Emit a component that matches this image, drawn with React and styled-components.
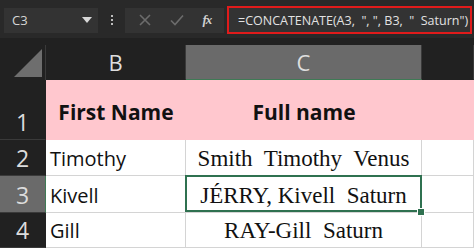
import React from 'react';
import styled, { createGlobalStyle } from 'styled-components';

const Global = createGlobalStyle`
  html, body {
    margin: 0;
    padding: 0;
    background: #212121;
    overflow: hidden;
  }
`;

const Page = styled.div`
  width: 474px;
  height: 248px;
  background: #212121;
  display: flex;
  flex-direction: column;
  overflow: hidden;
`;

const Toolbar = styled.div`
  height: 38px;
  background: #292929;
  display: flex;
  align-items: center;
  padding: 0 2px 0 4px;
  box-sizing: border-box;
  flex-shrink: 0;
`;

const NameBox = styled.div`
  width: 94px;
  height: 25px;
  margin-top: 2px;
  background: #333333;
  display: flex;
  align-items: center;
  justify-content: space-between;
  padding: 0 6px 0 8px;
  box-sizing: border-box;
  font-family: "Open Sans", "Liberation Sans", sans-serif;
  font-size: 13px;
  color: #d6d6d6;
`;

const Caret = styled.span`
  width: 0;
  height: 0;
  border-left: 5px solid transparent;
  border-right: 5px solid transparent;
  border-top: 6px solid #d8d8d8;
`;

const Dots = styled.div`
  width: 27px;
  display: flex;
  flex-direction: column;
  align-items: center;
  gap: 2px;
  margin-top: 2px;
  span {
    width: 2px;
    height: 2px;
    background: #bdbdbd;
  }
`;

const ButtonBox = styled.div`
  width: 99px;
  height: 25px;
  margin-top: 2px;
  background: #333333;
  display: flex;
  align-items: center;
  justify-content: space-around;
  padding: 0 4px;
  box-sizing: border-box;
`;

const FxLabel = styled.span`
  font-family: "Liberation Serif", serif;
  font-style: italic;
  font-weight: bold;
  font-size: 13px;
  color: #d0d0d0;
  letter-spacing: -1px;
`;

const FormulaBox = styled.div`
  margin-left: 3px;
  flex: 1;
  height: 28px;
  margin-top: 2px;
  border: 2px solid #e01b1b;
  background: #333333;
  box-sizing: border-box;
  display: flex;
  align-items: center;
  padding-left: 9px;
  font-family: "Open Sans", "Liberation Sans", sans-serif;
  font-size: 12.5px;
  color: #e2e2e2;
  white-space: pre;
`;

const Grid = styled.div`
  margin-top: 7px;
  display: grid;
  grid-template-columns: 46px 140px 236px 1fr;
  grid-template-rows: 35px 60px 36px 37px 1fr;
  flex: 1;
`;

const Corner = styled.div`
  background: #212121;
  position: relative;
  border-right: 1px solid #3a3a3a;
`;

const CornerTriangle = styled.div`
  position: absolute;
  right: 3px;
  bottom: 3px;
  width: 0;
  height: 0;
  border-left: 28px solid transparent;
  border-bottom: 28px solid #6e6e6e;
`;

const ColHead = styled.div`
  background: ${p => (p.$active ? '#6a6a6a' : '#212121')};
  border-bottom: 1px solid ${p => (p.$active ? '#3f7a55' : '#212121')};
  border-right: 1px solid #3a3a3a;
  display: flex;
  align-items: center;
  justify-content: center;
  font-family: "Open Sans", "Liberation Sans", sans-serif;
  font-size: 22px;
  color: #dedede;
  box-sizing: border-box;
`;

const RowHead = styled.div`
  background: ${p => (p.$active ? '#6a6a6a' : '#212121')};
  border-right: 1px solid ${p => (p.$active ? '#3f7a55' : '#212121')};
  border-bottom: 1px solid #3a3a3a;
  display: flex;
  align-items: flex-end;
  justify-content: center;
  padding-bottom: 1px;
  font-family: "Open Sans", "Liberation Sans", sans-serif;
  font-size: 23px;
  line-height: 31px;
  color: #dcdcdc;
  box-sizing: border-box;
`;

const HeadCell = styled.div`
  background: #ffc7ce;
  display: flex;
  align-items: center;
  justify-content: center;
  font-family: "Open Sans", "Liberation Sans", sans-serif;
  font-weight: bold;
  font-size: 21px;
  color: #111;
  padding-top: 4px;
  box-sizing: border-box;
`;

const Cell = styled.div`
  position: relative;
  background: #ffffff;
  border-right: 1px solid #d4d4d4;
  border-bottom: 1px solid #d4d4d4;
  display: flex;
  align-items: flex-end;
  justify-content: ${p => (p.$center ? 'center' : 'flex-start')};
  padding: 0 4px 2px 4px;
  box-sizing: border-box;
  white-space: pre;
  font-family: ${p => (p.$serif ? '"Liberation Serif", serif' : '"Open Sans", "Liberation Sans", sans-serif')};
  font-size: ${p => (p.$serif ? '23px' : '20px')};
  line-height: 28px;
  color: #111;
`;

const Selection = styled.div`
  position: absolute;
  inset: -1px -1px 0 -1px;
  border: 2px solid #2f7150;
  pointer-events: none;
`;

const Handle = styled.div`
  position: absolute;
  right: -4px;
  bottom: -4px;
  width: 6px;
  height: 6px;
  background: #2f7150;
  border: 1px solid #fff;
  z-index: 2;
`;

const rows = [
  { n: '2', first: 'Timothy', full: 'Smith  Timothy  Venus' },
  { n: '3', first: 'Kivell', full: 'JÉRRY, Kivell  Saturn', active: true },
  { n: '4', first: 'Gill', full: 'RAY-Gill  Saturn' },
];

export default function App() {
  return (
    <Page>
      <Global />
      <Toolbar>
        <NameBox>
          C3
          <Caret />
        </NameBox>
        <Dots>
          <span />
          <span />
          <span />
        </Dots>
        <ButtonBox>
          <svg width="14" height="14" viewBox="0 0 14 14">
            <path d="M2 2 L12 12 M12 2 L2 12" stroke="#6c6c6c" strokeWidth="1.6" fill="none" />
          </svg>
          <svg width="16" height="14" viewBox="0 0 16 14">
            <path d="M2 7.5 L6 11.5 L14 2.5" stroke="#6c6c6c" strokeWidth="1.6" fill="none" />
          </svg>
          <FxLabel>fx</FxLabel>
        </ButtonBox>
        <FormulaBox>=CONCATENATE(A3,  ", ", B3,  "  Saturn")</FormulaBox>
      </Toolbar>
      <Grid>
        <Corner>
          <CornerTriangle />
        </Corner>
        <ColHead>B</ColHead>
        <ColHead $active>C</ColHead>
        <ColHead />

        <RowHead>1</RowHead>
        <HeadCell>First Name</HeadCell>
        <HeadCell>Full name</HeadCell>
        <HeadCell />

        {rows.map(r => (
          <React.Fragment key={r.n}>
            <RowHead $active={r.active}>{r.n}</RowHead>
            <Cell>{r.first}</Cell>
            <Cell $center $serif>
              {r.full}
              {r.active && (
                <>
                  <Selection />
                  <Handle />
                </>
              )}
            </Cell>
            <Cell />
          </React.Fragment>
        ))}
      </Grid>
    </Page>
  );
}
